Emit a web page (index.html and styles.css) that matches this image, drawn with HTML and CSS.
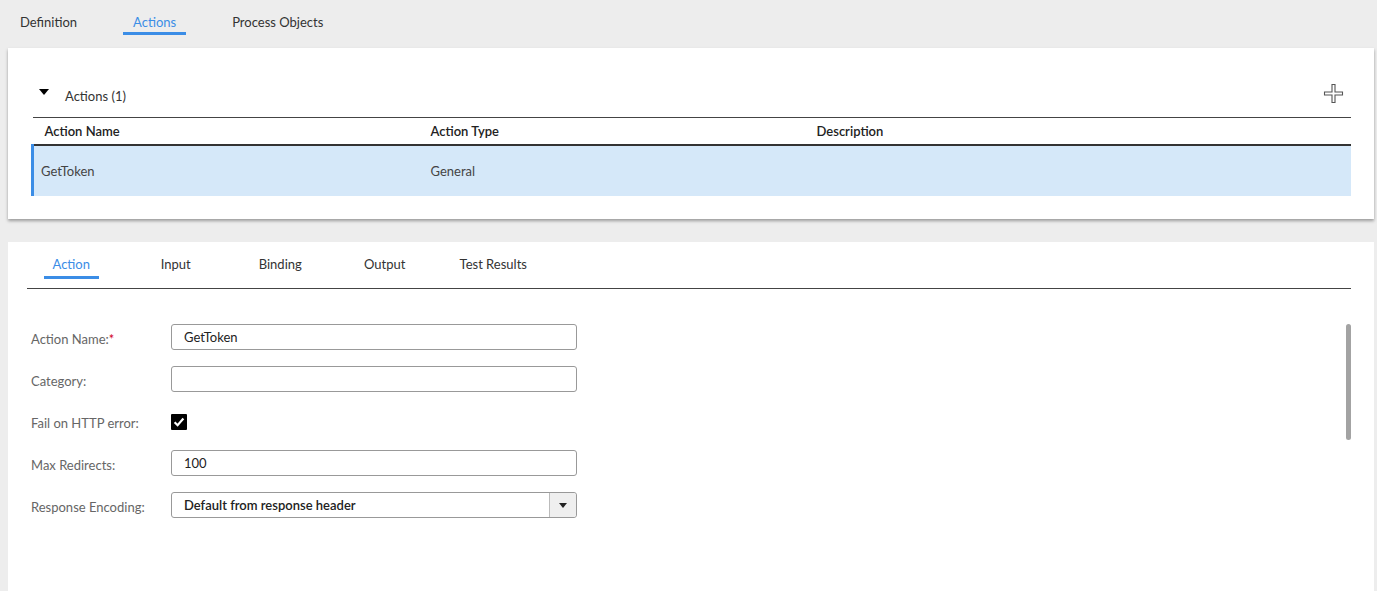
FILE: index.html
```html
<!DOCTYPE html>
<html>
  <head>
    <meta charset="UTF-8" />
    <title>Actions</title>
    <link rel="stylesheet" href="styles.css">
  </head>
  <body>
    <div class="top-tabs">
      <div class="top-tab">Definition</div>
      <div class="top-tab active">Actions</div>
      <div class="top-tab">Process Objects</div>
    </div>

    <div class="card actions-card">
      <div class="section-head">
        <span class="caret"></span>
        <span class="section-title">Actions (1)</span>
        <svg class="add-icon" width="21" height="21" viewBox="0 0 21 21">
          <path d="M9 1.5 H12 V9 H19.5 V12 H12 V19.5 H9 V12 H1.5 V9 H9 Z" fill="#fff" stroke="#555" stroke-width="1.1" />
        </svg>
      </div>
      <table class="grid">
        <thead>
          <tr>
            <th class="col-name">Action Name</th>
            <th class="col-type">Action Type</th>
            <th>Description</th>
          </tr>
        </thead>
        <tbody>
          <tr class="selected">
            <td>GetToken</td>
            <td>General</td>
            <td></td>
          </tr>
        </tbody>
      </table>
    </div>

    <div class="card detail-card">
      <div class="sub-tabs">
        <div class="sub-tab active"><span>Action</span></div>
        <div class="sub-tab"><span>Input</span></div>
        <div class="sub-tab"><span>Binding</span></div>
        <div class="sub-tab"><span>Output</span></div>
        <div class="sub-tab"><span>Test Results</span></div>
      </div>

      <div class="form-area">
        <div class="form">
          <div class="form-row">
            <label>Action Name:<span class="req">*</span></label>
            <div class="field">GetToken</div>
          </div>
          <div class="form-row">
            <label>Category:</label>
            <div class="field"></div>
          </div>
          <div class="form-row">
            <label>Fail on HTTP error:</label>
            <div class="checkbox">
              <svg width="16" height="16" viewBox="0 0 16 16">
                <rect width="16" height="16" rx="1" fill="#000" />
                <path d="M3.6 8.2 L6.6 11.2 L12.4 4.6" fill="none" stroke="#fff" stroke-width="2.2" />
              </svg>
            </div>
          </div>
          <div class="form-row">
            <label>Max Redirects:</label>
            <div class="field">100</div>
          </div>
          <div class="form-row">
            <label>Response Encoding:</label>
            <div class="field select">
              <span class="select-value">Default from response header</span>
              <span class="select-btn"><span class="down"></span></span>
            </div>
          </div>
        </div>
        <div class="scrollbar"></div>
      </div>
    </div>
  </body>
</html>
```

FILE: styles.css
```css
html,
body {
  height: 100%;
}
body {
  margin: 0;
  background-color: #ededed;
  font-family: "Lato", "Open Sans", sans-serif;
  font-size: 13px;
  color: #333;
  display: flex;
  flex-direction: column;
  overflow: hidden;
}

/* top tabs */
.top-tabs {
  display: flex;
  height: 48px;
  padding-left: 10px;
  gap: 36px;
}
.top-tab {
  padding: 0 10px;
  height: 35px;
  line-height: 44px;
  box-sizing: border-box;
  color: #333;
  border-bottom: 3px solid transparent;
}
.top-tab.active {
  color: #3b8de6;
  border-bottom-color: #3b8de6;
}

/* cards */
.card {
  background: #fff;
  margin: 0 3px 0 8px;
}
.actions-card {
  height: 171px;
  box-sizing: border-box;
  padding: 0 23px;
  box-shadow: 0 2px 3px rgba(0, 0, 0, 0.35);
}
.section-head {
  display: flex;
  align-items: center;
  height: 69px;
  box-sizing: border-box;
  padding-top: 23px;
}
.caret {
  width: 0;
  height: 0;
  margin: 0 0 5px 8px;
  border-left: 5px solid transparent;
  border-right: 5px solid transparent;
  border-top: 6px solid #000;
}
.section-title {
  margin-left: 16px;
  margin-top: 3px;
  color: #333;
}
.add-icon {
  margin-left: auto;
  margin-right: 7px;
  margin-top: -2px;
}

.grid {
  width: 100%;
  border-collapse: collapse;
  table-layout: fixed;
}
.grid thead th {
  text-align: left;
  font-weight: 600;
  color: #222;
  height: 26px;
  padding: 0 12px;
  border-top: 1px solid #444;
  border-bottom: 2px solid #333;
}
.grid .col-name,
.grid .col-type {
  width: 362px;
}
.grid td {
  height: 50px;
  padding: 0 12px;
  color: #444;
}
.grid tr.selected td {
  background: #d5e8f9;
}
.grid tr.selected td:first-child {
  border-left: 3px solid #3b8de6;
  padding-left: 7px;
}

.detail-card {
  flex: 1;
  margin-top: 23px;
  padding: 0 23px 0 23px;
}

/* sub tabs */
.sub-tabs {
  display: flex;
  margin-left: -4px;
  height: 46px;
  border-bottom: 1px solid #444;
}
.sub-tab {
  width: 104.5px;
  text-align: center;
  padding-top: 14px;
  box-sizing: border-box;
  color: #333;
}
.sub-tab:first-child {
  margin-left: -8px;
}
.sub-tab:last-child {
  margin-left: 4px;
}
.sub-tab span {
  display: inline-block;
  padding: 0 9px 4px;
  border-bottom: 3px solid transparent;
}
.sub-tab.active span {
  color: #3b8de6;
  border-bottom-color: #3b8de6;
}

/* form */
.form-area {
  display: flex;
  padding-top: 35px;
}
.form {
  flex: 1;
}
.form-row {
  display: flex;
  align-items: center;
  height: 26px;
  margin-bottom: 16px;
}
.form-row label {
  width: 140px;
  color: #666;
  padding-top: 3px;
}
.req {
  color: #d0021b;
}
.field {
  width: 406px;
  height: 26px;
  box-sizing: border-box;
  border: 1px solid #999;
  border-radius: 3px;
  padding-left: 12px;
  line-height: 24px;
  color: #222;
}
.checkbox {
  height: 16px;
  margin-top: 2px;
}
.select {
  display: flex;
  padding-left: 0;
}
.select-value {
  flex: 1;
  padding-left: 12px;
  font-weight: 600;
  color: #222;
}
.select-btn {
  width: 26px;
  border-left: 1px solid #bbb;
  background: #efefef;
  border-radius: 0 3px 3px 0;
  display: flex;
  align-items: center;
  justify-content: center;
}
.down {
  width: 0;
  height: 0;
  border-left: 4px solid transparent;
  border-right: 4px solid transparent;
  border-top: 5px solid #222;
}
.scrollbar {
  width: 5px;
  height: 116px;
  background: #a3a3a3;
  border-radius: 3px;
}
```
